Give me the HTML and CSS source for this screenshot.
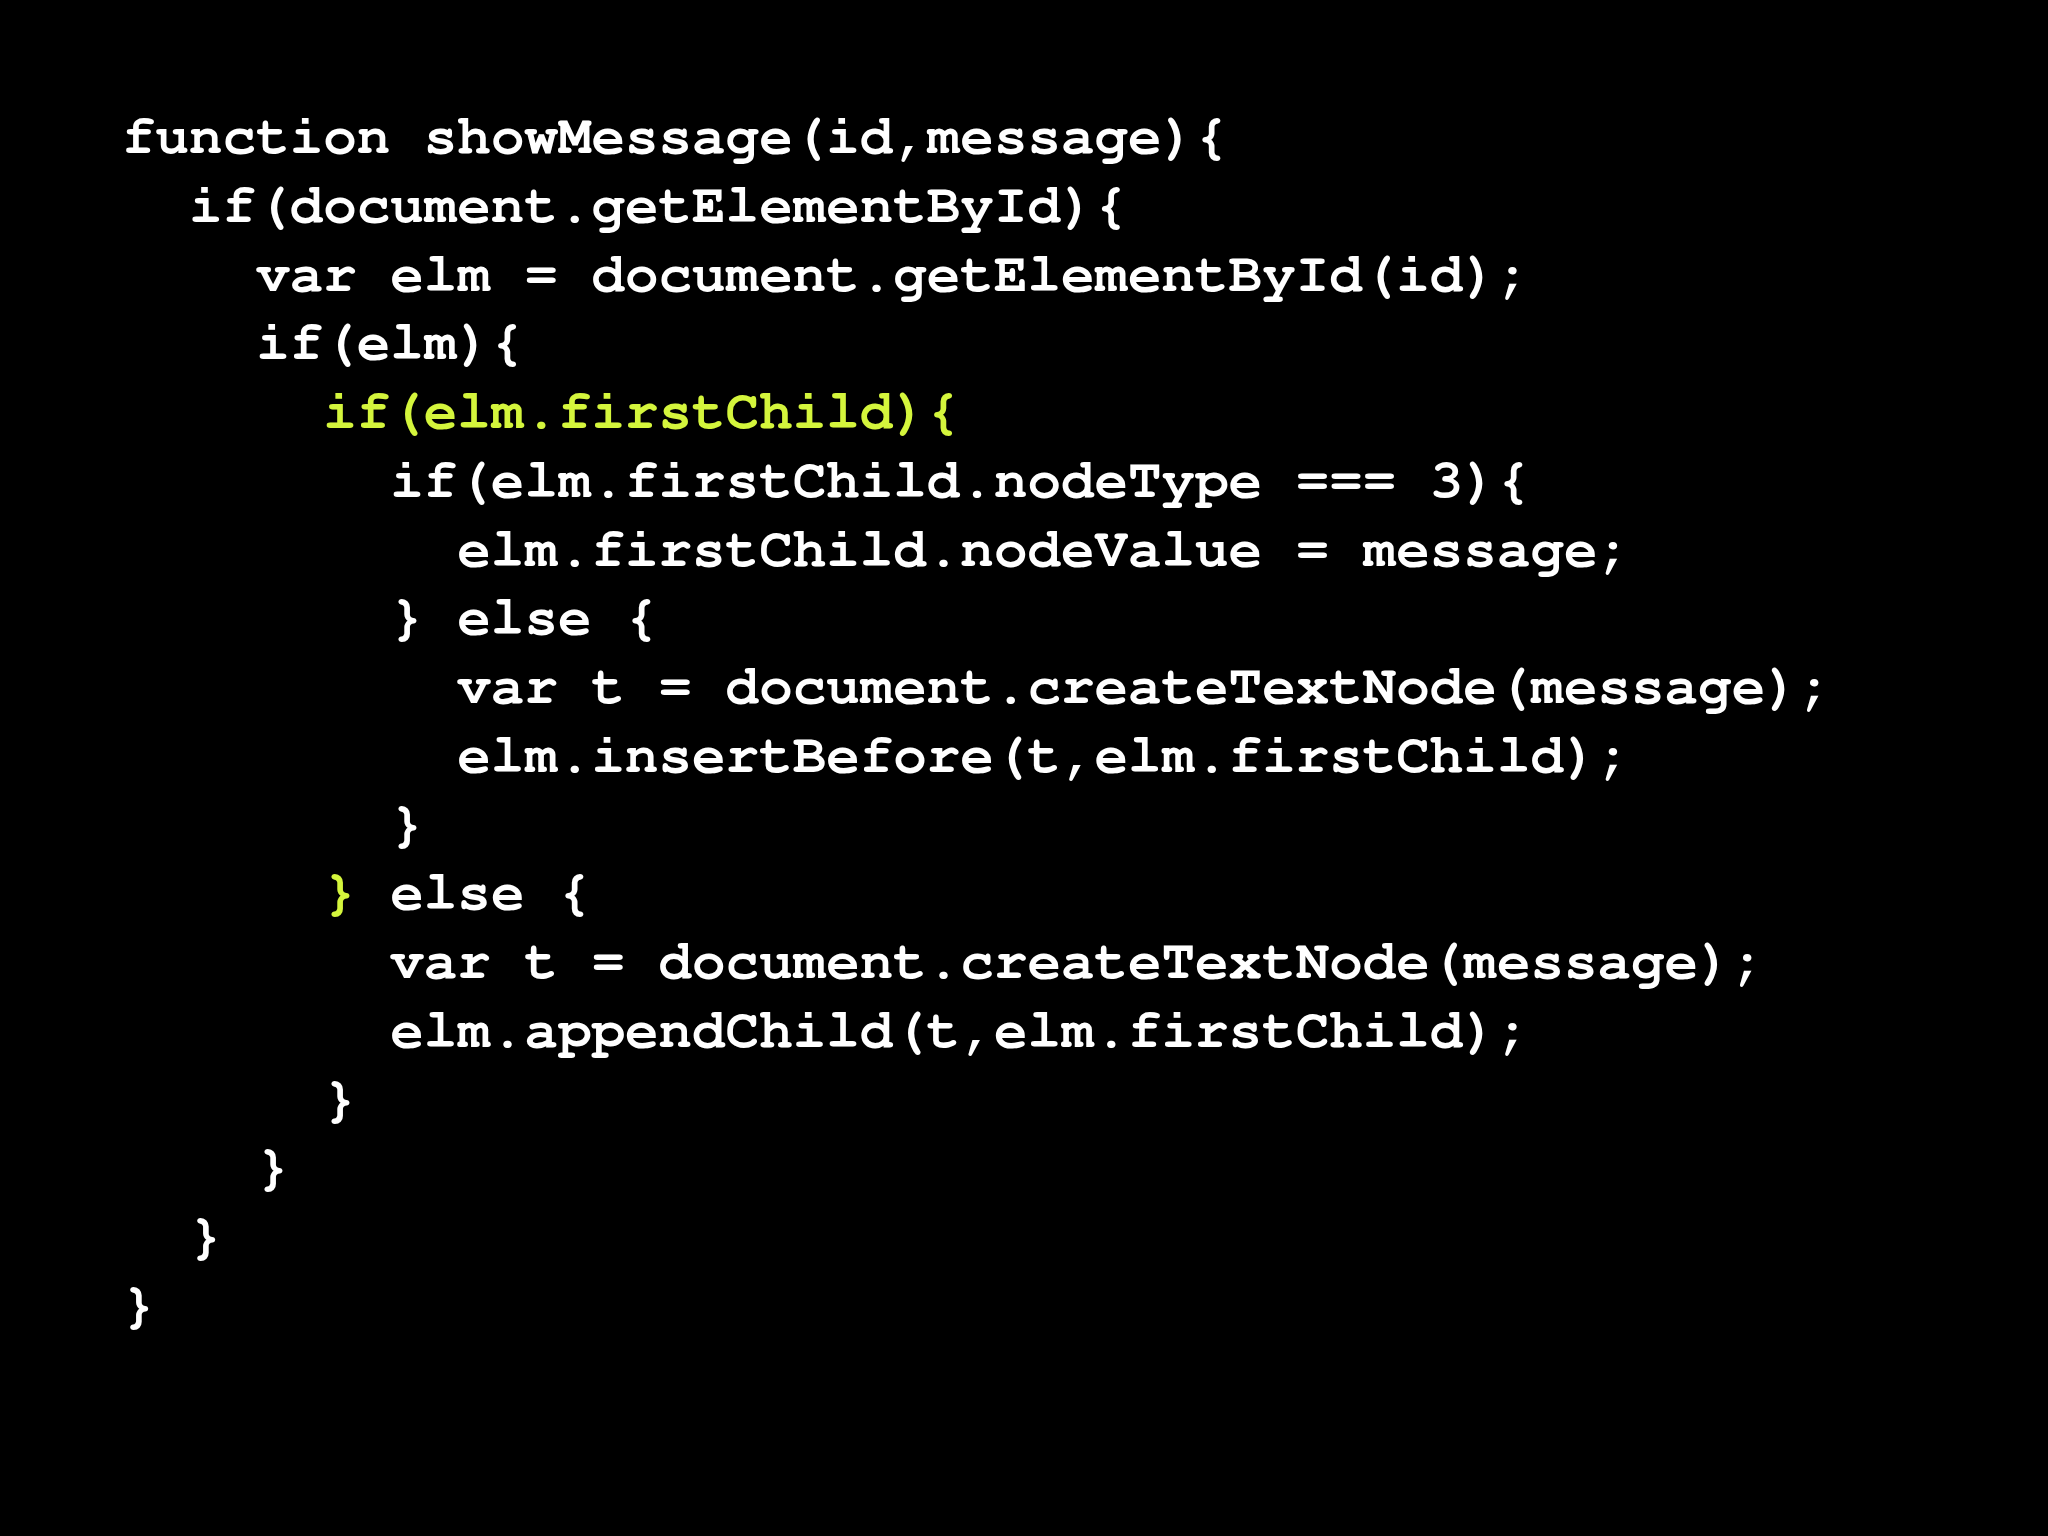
FILE: index.html
```html
<!DOCTYPE html>
<html>
<head>
<meta charset="utf-8">
<link rel="stylesheet" href="styles.css">
</head>
<body>
<main class="slide">
<pre class="code"><span class="l0">function showMessage(id,message){</span>
<span class="l1">if(document.getElementById){</span>
<span class="l2">var elm = document.getElementById(id);</span>
<span class="l2">if(elm){</span>
<span class="l3 hl">if(elm.firstChild){</span>
<span class="l4">if(elm.firstChild.nodeType === 3){</span>
<span class="l5">elm.firstChild.nodeValue = message;</span>
<span class="l4">} else {</span>
<span class="l5">var t = document.createTextNode(message);</span>
<span class="l5">elm.insertBefore(t,elm.firstChild);</span>
<span class="l4">}</span>
<span class="l3"><span class="hl">}</span> else {</span>
<span class="l4">var t = document.createTextNode(message);</span>
<span class="l4">elm.appendChild(t,elm.firstChild);</span>
<span class="l3">}</span>
<span class="l2">}</span>
<span class="l1">}</span>
<span class="l0">}</span></pre>
</main>
</body>
</html>
```

FILE: styles.css
```css
html, body {
  margin: 0;
  padding: 0;
  background: #000;
}
.slide {
  width: 2048px;
  height: 1536px;
  background: #000;
  box-sizing: border-box;
  padding: 102px 0 0 122px;
}
.code {
  margin: 0;
  font-family: "Nimbus Mono PS", "Nimbus Mono L", "FreeMono", "Courier 10 Pitch", "Liberation Mono", monospace;
  font-weight: bold;
  font-size: 55.9px;
  line-height: 68.75px;
  color: #ffffff;
  white-space: pre;
}
.l1 { padding-left: 2ch; }
.l2 { padding-left: 4ch; }
.l3 { padding-left: 6ch; }
.l4 { padding-left: 8ch; }
.l5 { padding-left: 10ch; }
.hl { color: #d4f53c; }
```
